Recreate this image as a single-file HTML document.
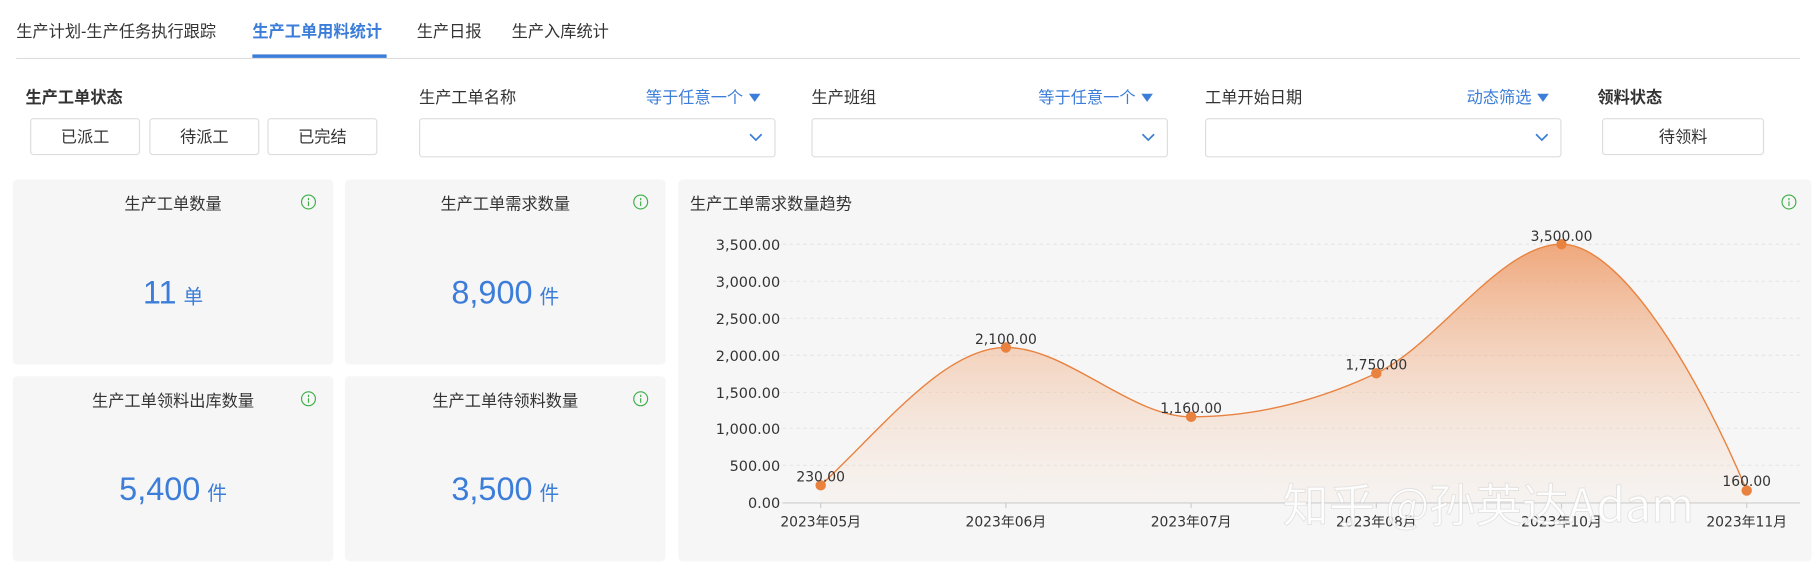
<!DOCTYPE html>
<html><head><meta charset="utf-8"><style>
*{margin:0;padding:0;box-sizing:border-box}
html,body{width:1815px;height:580px;overflow:hidden;background:#fff}
#w{position:absolute;left:0;top:0;width:1568px;height:501px;transform:scale(1.15753);transform-origin:0 0;font-family:"Liberation Sans","Noto Sans CJK SC",sans-serif;color:#333;font-size:14px}
.a{position:absolute;white-space:nowrap}
.tab{top:17px;font-size:14px;color:#333}
.btn{position:absolute;top:102px;height:32px;border:1px solid #ddd;border-radius:3px;background:#fff;text-align:center;line-height:30px;font-size:14px;color:#333}
.sel{position:absolute;top:102px;height:34px;border:1px solid #ddd;border-radius:3px;background:#fff}
.sel svg{position:absolute;right:10px;top:12px}
.lbl{top:74px;font-size:14px}
.blue{color:#3b7dd8}
.tri{display:inline-block;width:0;height:0;border-left:5px solid transparent;border-right:5px solid transparent;border-top:7px solid #3b7dd8;margin-left:5px;vertical-align:1px}
.card{position:absolute;background:#f6f6f6;border-radius:4px}
.ct{position:absolute;top:11px;left:0;right:0;text-align:center;font-size:14px;color:#333}
.info{position:absolute;top:13px;width:13px;height:13px;border:1.3px solid #3fae49;border-radius:50%}
.info:before{content:"";position:absolute;left:4.5px;top:2px;width:1.5px;height:1.5px;background:#3fae49}
.info:after{content:"";position:absolute;left:4.5px;top:4.5px;width:1.5px;height:4.5px;background:#3fae49}
.val{position:absolute;top:82px;left:0;right:0;text-align:center;color:#3b7dd8;font-size:28px}
.val span{font-size:17px;margin-left:6px}
</style></head><body><div id="w">
<div class="a tab" style="left:14px">生产计划-生产任务执行跟踪</div>
<div class="a tab" style="left:218px;color:#3b7dd8;font-weight:bold">生产工单用料统计</div>
<div class="a tab" style="left:360px">生产日报</div>
<div class="a tab" style="left:442px">生产入库统计</div>
<div class="a" style="left:14px;top:50px;width:1541px;height:1px;background:#ddd"></div>
<div class="a" style="left:218px;top:47px;width:116px;height:3px;background:#3b7dd8"></div>

<div class="a lbl" style="left:22px;font-weight:bold">生产工单状态</div>
<div class="a lbl" style="left:362px">生产工单名称</div>
<div class="a lbl blue" style="left:558px">等于任意一个<i class="tri"></i></div>
<div class="a lbl" style="left:701px">生产班组</div>
<div class="a lbl blue" style="left:897px">等于任意一个<i class="tri"></i></div>
<div class="a lbl" style="left:1041px">工单开始日期</div>
<div class="a lbl blue" style="left:1267px">动态筛选<i class="tri"></i></div>
<div class="a lbl" style="left:1380px;font-weight:bold">领料状态</div>

<div class="btn" style="left:26px;width:95px">已派工</div>
<div class="btn" style="left:129px;width:95px">待派工</div>
<div class="btn" style="left:231px;width:95px">已完结</div>
<div class="btn" style="left:1384px;width:140px">待领料</div>
<div class="sel" style="left:362px;width:308px"><svg width="12" height="8"><path d="M1 1L6 6L11 1" stroke="#3b7dd8" stroke-width="1.5" fill="none"/></svg></div>
<div class="sel" style="left:701px;width:308px"><svg width="12" height="8"><path d="M1 1L6 6L11 1" stroke="#3b7dd8" stroke-width="1.5" fill="none"/></svg></div>
<div class="sel" style="left:1041px;width:308px"><svg width="12" height="8"><path d="M1 1L6 6L11 1" stroke="#3b7dd8" stroke-width="1.5" fill="none"/></svg></div>

<div class="card" style="left:11px;top:155px;width:277px;height:160px"><div class="ct">生产工单数量</div><div class="info" style="left:249px"></div><div class="val">11<span>单</span></div></div>
<div class="card" style="left:298px;top:155px;width:277px;height:160px"><div class="ct">生产工单需求数量</div><div class="info" style="left:249px"></div><div class="val">8,900<span>件</span></div></div>
<div class="card" style="left:11px;top:325px;width:277px;height:160px"><div class="ct">生产工单领料出库数量</div><div class="info" style="left:249px"></div><div class="val">5,400<span>件</span></div></div>
<div class="card" style="left:298px;top:325px;width:277px;height:160px"><div class="ct">生产工单待领料数量</div><div class="info" style="left:249px"></div><div class="val">3,500<span>件</span></div></div>

<div class="card" style="left:586px;top:155px;width:979px;height:330px"><div class="ct" style="text-align:left;left:10px">生产工单需求数量趋势</div><div class="info" style="left:953px"></div></div>

<svg class="a" style="left:0;top:0" width="1568" height="501">
<defs><linearGradient id="g" x1="0" y1="0" x2="0" y2="1"><stop offset="0" stop-color="#ee9a66" stop-opacity=".85"/><stop offset="1" stop-color="#f6e0d0" stop-opacity=".15"/></linearGradient></defs>
<g stroke="#e6e6e6" stroke-dasharray="3,3">
<line x1="676" x2="1555" y1="211" y2="211"/><line x1="676" x2="1555" y1="243" y2="243"/><line x1="676" x2="1555" y1="275" y2="275"/><line x1="676" x2="1555" y1="307" y2="307"/><line x1="676" x2="1555" y1="339" y2="339"/><line x1="676" x2="1555" y1="370" y2="370"/><line x1="676" x2="1555" y1="402" y2="402"/></g>
<line x1="676" x2="1555" y1="434.5" y2="434.5" stroke="#ccc"/>
<g stroke="#ccc"><line x1="709" x2="709" y1="435" y2="439"/><line x1="869" x2="869" y1="435" y2="439"/><line x1="1029" x2="1029" y1="435" y2="439"/><line x1="1189" x2="1189" y1="435" y2="439"/><line x1="1349" x2="1349" y1="435" y2="439"/><line x1="1509" x2="1509" y1="435" y2="439"/></g>
<path d="M709,419.3 C762,370 816,300.2 869,300.2 C922,300.2 976,360.1 1029,360.1 C1082,360.1 1136,347.3 1189,322.5 C1242,297.7 1296,211 1349,211 C1402,211 1470,330 1509,423.8 L1509,434 L709,434 Z" fill="url(#g)"/>
<path d="M709,419.3 C762,370 816,300.2 869,300.2 C922,300.2 976,360.1 1029,360.1 C1082,360.1 1136,347.3 1189,322.5 C1242,297.7 1296,211 1349,211 C1402,211 1470,330 1509,423.8" fill="none" stroke="#e9823f" stroke-width="1.2"/>
<g fill="#e9823f"><circle cx="709" cy="419.3" r="4.5"/><circle cx="869" cy="300.2" r="4.5"/><circle cx="1029" cy="360.1" r="4.5"/><circle cx="1189" cy="322.5" r="4.5"/><circle cx="1349" cy="211" r="4.5"/><circle cx="1509" cy="423.8" r="4.5"/></g>
<g font-family="DejaVu Sans,sans-serif" font-size="12.5" fill="#333" text-anchor="end">
<text x="674" y="216">3,500.00</text><text x="674" y="248">3,000.00</text><text x="674" y="280">2,500.00</text><text x="674" y="312">2,000.00</text><text x="674" y="344">1,500.00</text><text x="674" y="375">1,000.00</text><text x="674" y="407">500.00</text><text x="674" y="439">0.00</text></g>
<g font-family="DejaVu Sans,'Noto Sans CJK SC',sans-serif" font-size="12" fill="#333" text-anchor="middle">
<text x="709" y="455">2023年05月</text><text x="869" y="455">2023年06月</text><text x="1029" y="455">2023年07月</text><text x="1189" y="455">2023年08月</text><text x="1349" y="455">2023年10月</text><text x="1509" y="455">2023年11月</text>
<text x="709" y="416">230.00</text><text x="869" y="297">2,100.00</text><text x="1029" y="357">1,160.00</text><text x="1189" y="319">1,750.00</text><text x="1349" y="208">3,500.00</text><text x="1509" y="420">160.00</text></g>
<text x="1108" y="451" font-family="'Noto Sans CJK SC',sans-serif" font-size="40" fill="#fff" fill-opacity=".85" stroke="#bbb" stroke-opacity=".35" stroke-width=".8">知乎 @孙英达Adam</text>
</svg>
</div></body></html>
